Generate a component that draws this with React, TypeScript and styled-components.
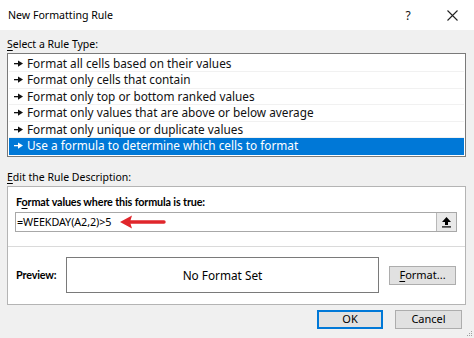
import React from 'react';
import styled, { createGlobalStyle } from 'styled-components';

const GlobalStyle = createGlobalStyle`
  html, body {
    margin: 0;
    padding: 0;
    background: #f0f0f0;
  }
  body {
    font-family: "Noto Sans", "Open Sans", sans-serif;
    font-size: 10.5px;
    color: #000;
  }
`;

const ruleTypes = [
  'Format all cells based on their values',
  'Format only cells that contain',
  'Format only top or bottom ranked values',
  'Format only values that are above or below average',
  'Format only unique or duplicate values',
  'Use a formula to determine which cells to format',
];

const Dialog = styled.div`
  width: 474px;
  height: 338px;
  background: #f0f0f0;
  display: flex;
  flex-direction: column;
  position: relative;
  overflow: hidden;
`;

const TitleBar = styled.div`
  height: 30px;
  flex-shrink: 0;
  background: #fff;
  display: flex;
  align-items: center;
  padding-left: 8px;
`;

const Title = styled.div`
  flex: 1;
  font-size: 10.6px;
  line-height: 16px;
`;

const TitleButton = styled.div`
  width: 44px;
  height: 30px;
  display: flex;
  align-items: center;
  justify-content: center;
  font-size: 12px;
  color: #111;
`;

const Body = styled.div`
  padding: 0 8px 0 7px;
  display: flex;
  flex-direction: column;
`;

const SectionLabel = styled.div<{ $top: number }>`
  padding-top: ${(p) => p.$top}px;
  line-height: 16px;
  height: 16px;
  margin-bottom: 1px;
`;

const Key = styled.span`
  text-decoration: underline;
  text-underline-offset: 2px;
`;

const RuleList = styled.div`
  border: 1px solid #7a7a7a;
  background: #fff;
  padding: 1.5px 1px 1px 1px;
  display: flex;
  flex-direction: column;
`;

const RuleRow = styled.div<{ $selected?: boolean }>`
  height: 16.5px;
  box-sizing: border-box;
  display: flex;
  align-items: center;
  gap: 4px;
  padding-left: 5px;
  font-size: 11.8px;
  background: ${(p) => (p.$selected ? '#0078d7' : '#fff')};
  color: ${(p) => (p.$selected ? '#fff' : '#111')};
  border-bottom: 1px solid ${(p) => (p.$selected ? '#0078d7' : '#f1f1f1')};
  white-space: nowrap;
  line-height: 15px;
`;

const Panel = styled.div`
  border: 1px solid #b4b4b4;
  background: #fff;
  display: flex;
  flex-direction: column;
`;

const FormulaSection = styled.div`
  padding: 7px 8px 14px 7px;
  border-bottom: 1px solid #dadada;
`;

const BoldLabel = styled.div`
  font-family: Lato, "Noto Sans", sans-serif;
  font-weight: bold;
  font-size: 10.8px;
  letter-spacing: -0.15px;
  line-height: 16px;
  padding-left: 1px;
  margin-bottom: 2px;
`;

const FormulaBox = styled.div`
  height: 20px;
  box-sizing: border-box;
  border: 1px solid #a8a8a8;
  display: flex;
  align-items: stretch;
`;

const FormulaText = styled.div`
  flex: 1;
  display: flex;
  align-items: center;
  gap: 9px;
  padding-left: 1px;
  font-size: 10.8px;
  letter-spacing: -0.1px;
`;

const CollapseButton = styled.div`
  width: 19px;
  background: #e9e9e9;
  border-left: 1px solid #b8b8b8;
  display: flex;
  align-items: center;
  justify-content: center;
`;

const PreviewSection = styled.div`
  display: flex;
  align-items: center;
  padding: 0 9px 0 8px;
  height: 57px;
`;

const PreviewLabel = styled(BoldLabel)`
  width: 50px;
  margin: 0;
  padding: 0;
`;

const PreviewBox = styled.div`
  width: 313px;
  height: 36px;
  box-sizing: border-box;
  border: 1px solid #7a7a7a;
  display: flex;
  align-items: center;
  justify-content: center;
  font-size: 11.8px;
  margin-right: 10px;
`;

const Button = styled.div<{ $default?: boolean; $w: number }>`
  width: ${(p) => p.$w}px;
  height: 19px;
  box-sizing: border-box;
  background: #e1e1e1;
  border: 1px solid ${(p) => (p.$default ? '#0078d7' : '#adadad')};
  box-shadow: ${(p) => (p.$default ? 'inset 0 0 0 1px #0078d7' : 'none')};
  display: flex;
  align-items: center;
  justify-content: center;
  font-size: 11px;
  line-height: 14px;
`;

const Footer = styled.div`
  display: flex;
  justify-content: flex-end;
  gap: 12px;
  padding: 5px 4px 0 0;
`;

const Grip = styled.svg`
  position: absolute;
  right: 1px;
  bottom: 1px;
`;

const Pointer = () => (
  <svg width="9" height="7" viewBox="0 0 9 7">
    <rect x="0" y="3" width="5" height="1.3" fill="currentColor" />
    <polygon points="4,0.5 9,3.6 4,6.7" fill="currentColor" />
  </svg>
);

const RedArrow = () => (
  <svg width="46" height="14" viewBox="0 0 46 14">
    <line x1="9" y1="7" x2="44" y2="7" stroke="#e0262b" strokeWidth="3.4" strokeLinecap="round" />
    <polygon points="0,7 12,0.5 10,7 12,13.5" fill="#e0262b" />
  </svg>
);

const UpIcon = () => (
  <svg width="11" height="12" viewBox="0 0 11 12">
    <polygon points="5.5,1 10,6 7,6 7,9 4,9 4,6 1,6" fill="#000" />
    <rect x="1" y="10.3" width="9" height="1.2" fill="#000" />
  </svg>
);

export default function App() {
  return (
    <>
      <GlobalStyle />
      <Dialog>
        <TitleBar>
          <Title>New Formatting Rule</Title>
          <TitleButton>?</TitleButton>
          <TitleButton>
            <svg width="11" height="11" viewBox="0 0 11 11">
              <path d="M0.5 0.5 L10.5 10.5 M10.5 0.5 L0.5 10.5" stroke="#222" strokeWidth="1.1" />
            </svg>
          </TitleButton>
        </TitleBar>
        <Body>
          <SectionLabel $top={6}>
            <Key>S</Key>elect a Rule Type:
          </SectionLabel>
          <RuleList>
            {ruleTypes.map((r, i) => (
              <RuleRow key={r} $selected={i === ruleTypes.length - 1}>
                <Pointer />
                {r}
              </RuleRow>
            ))}
          </RuleList>
          <SectionLabel $top={12}>
            <Key>E</Key>dit the Rule Description:
          </SectionLabel>
          <Panel>
            <FormulaSection>
              <BoldLabel>
                F<Key>o</Key>rmat values where this formula is true:
              </BoldLabel>
              <FormulaBox>
                <FormulaText>
                  =WEEKDAY(A2,2)&gt;5
                  <RedArrow />
                </FormulaText>
                <CollapseButton>
                  <UpIcon />
                </CollapseButton>
              </FormulaBox>
            </FormulaSection>
            <PreviewSection>
              <PreviewLabel>Preview:</PreviewLabel>
              <PreviewBox>No Format Set</PreviewBox>
              <Button $w={67}>
                <Key>F</Key>ormat...
              </Button>
            </PreviewSection>
          </Panel>
          <Footer>
            <Button $default $w={66}>OK</Button>
            <Button $w={67}>Cancel</Button>
          </Footer>
        </Body>
        <Grip width="8" height="8" viewBox="0 0 8 8">
          {[[6, 2], [6, 4], [4, 4], [6, 6], [4, 6], [2, 6]].map(([x, y]) => (
            <rect key={`${x}-${y}`} x={x} y={y} width="1" height="1" fill="#a0a0a0" />
          ))}
        </Grip>
      </Dialog>
    </>
  );
}
